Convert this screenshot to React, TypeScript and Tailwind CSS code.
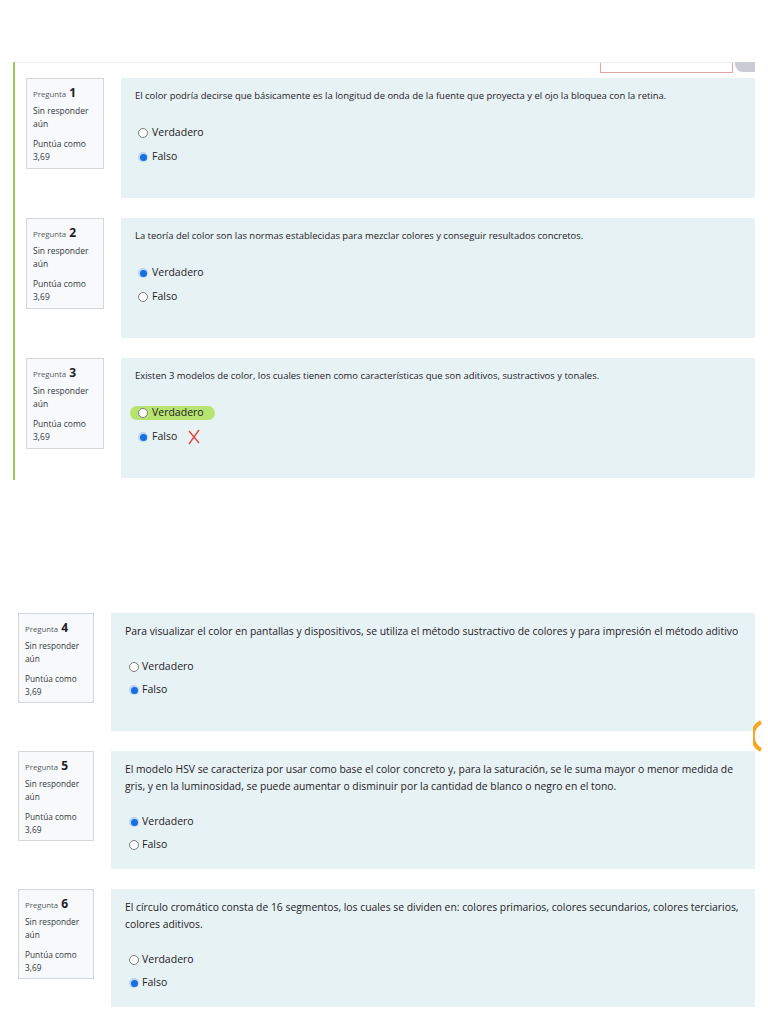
import React from "react";

type Q = {
  n: number;
  text: React.ReactNode;
  checked: "v" | "f";
  highlightV?: boolean;
  wrongF?: boolean;
};

const font = { fontFamily: '"Open Sans", "Noto Sans", sans-serif' };

function Radio({ on }: { on: boolean }) {
  return on ? (
    <span className="inline-flex items-center justify-center w-[10px] h-[10px] rounded-full bg-[#b9d4f5] shrink-0">
      <span className="w-[7px] h-[7px] rounded-full bg-[#1a6fe0]" />
    </span>
  ) : (
    <span className="inline-block w-[10px] h-[10px] rounded-full border border-[#7d7d7d] bg-white shrink-0" />
  );
}

function RedX() {
  return (
    <svg width="14" height="16" viewBox="0 0 14 16" className="ml-[6px]">
      <path d="M2 2 L12 14 M12 1 L2 15" stroke="#e8403a" strokeWidth="1.3" fill="none" />
    </svg>
  );
}

function InfoBox({ n, w, text }: { n: number; w: string; text: string }) {
  return (
    <div className={`${w} shrink-0 self-start border border-[#d3d6da] bg-[#f8f9fa] px-[6px] pt-[5px] pb-[9px] text-[#33383d] ${text}`}>
      <div className="flex items-baseline gap-[3px]">
        <span className="text-[7.8px] text-[#55595e]">Pregunta</span>
        <span className="text-[12px] font-bold text-[#1d2125]">{n}</span>
      </div>
      <div className="mt-[2px] leading-[13px]">Sin responder<br />aún</div>
      <div className="mt-[7px] leading-[13px]">Puntúa como<br />3,69</div>
    </div>
  );
}

function QuestionA({ q }: { q: Q }) {
  return (
    <div className="flex gap-[17px]">
      <InfoBox n={q.n} w="w-[78px] h-[91px]" text="text-[8.5px]" />
      <div className="flex-1 h-[120px] bg-[#e7f2f4] pl-[14px] pt-[11px] text-[#1d2125]">
        <div className="text-[9.45px] leading-[14px]">{q.text}</div>
        <div className="mt-[23px] ml-[3px] flex flex-col gap-[10px] text-[10.5px]">
          <div className="flex items-center">
            <span className={`flex items-center gap-[4px] h-[14px] ${q.highlightV ? "bg-[#b7e36f] rounded-full pl-[8px] pr-[11px] -ml-[8px]" : ""}`}>
              <Radio on={q.checked === "v"} />
              <span>Verdadero</span>
            </span>
          </div>
          <div className="flex items-center gap-[4px] h-[14px]">
            <Radio on={q.checked === "f"} />
            <span>Falso</span>
            {q.wrongF && <RedX />}
          </div>
        </div>
      </div>
    </div>
  );
}

function QuestionB({ q }: { q: Q }) {
  return (
    <div className="flex gap-[17px]">
      <InfoBox n={q.n} w="w-[76px] h-[90px]" text="text-[8.3px]" />
      <div className="flex-1 h-[118px] bg-[#e7f2f4] pl-[14px] pt-[10px] text-[#1d2125]">
        <div className="text-[10.35px] leading-[17px]">{q.text}</div>
        <div className="mt-[20px] ml-[4px] flex flex-col gap-[9px] text-[10.5px]">
          <div className="flex items-center gap-[3px] h-[14px]">
            <Radio on={q.checked === "v"} />
            <span>Verdadero</span>
          </div>
          <div className="flex items-center gap-[3px] h-[14px]">
            <Radio on={q.checked === "f"} />
            <span>Falso</span>
          </div>
        </div>
      </div>
    </div>
  );
}

export default function App() {
  const qa: Q[] = [
    {
      n: 1,
      text: "El color podría decirse que básicamente es la longitud de onda de la fuente que proyecta y el ojo la bloquea con la retina.",
      checked: "f",
    },
    {
      n: 2,
      text: "La teoría del color son las normas establecidas para mezclar colores y conseguir resultados concretos.",
      checked: "v",
    },
    {
      n: 3,
      text: "Existen 3 modelos de color, los cuales tienen como características que son aditivos, sustractivos y tonales.",
      checked: "f",
      highlightV: true,
      wrongF: true,
    },
  ];
  const qb: Q[] = [
    {
      n: 4,
      text: "Para visualizar el color en pantallas y dispositivos, se utiliza el método sustractivo de colores y para impresión el método aditivo",
      checked: "f",
    },
    {
      n: 5,
      text: (
        <>
          El modelo HSV se caracteriza por usar como base el color concreto y, para la saturación, se le suma mayor o menor medida de
          <br />
          gris, y en la luminosidad, se puede aumentar o disminuir por la cantidad de blanco o negro en el tono.
        </>
      ),
      checked: "v",
    },
    {
      n: 6,
      text: (
        <>
          El círculo cromático consta de 16 segmentos, los cuales se dividen en: colores primarios, colores secundarios, colores terciarios,
          <br />
          colores aditivos.
        </>
      ),
      checked: "f",
    },
  ];

  return (
    <div className="relative w-[768px] h-[1024px] bg-white overflow-hidden" style={font}>
      {/* Section A */}
      <div className="ml-[13px] mt-[62px] w-[742px] h-[418px] border-l-2 border-[#9bc85a] flex flex-col">
        <div className="flex h-[16px] items-start">
          <div className="flex-1 h-[10px] border-t border-[#ececec] flex justify-end">
            <div className="w-[133px] h-[10px] border-x border-b border-[#e0a4a4] mr-[2px]" />
          </div>
          <div className="w-[20px] h-[10px] bg-[#c9cdd3] rounded-bl-[8px]" />
        </div>
        <div className="pl-[11px] flex flex-col gap-[20px]">
          {qa.map((q) => (
            <QuestionA key={q.n} q={q} />
          ))}
        </div>
      </div>

      {/* Section B */}
      <div className="ml-[18px] mt-[133px] w-[737px] flex flex-col gap-[20px]">
        {qb.map((q) => (
          <QuestionB key={q.n} q={q} />
        ))}
      </div>

      {/* orange floating element edge */}
      <svg className="absolute left-[753px] top-[720px]" width="15" height="32" viewBox="0 0 15 32">
        <path d="M8 2 A 16 16 0 0 0 8 30" stroke="#f5a623" strokeWidth="4" fill="none" />
      </svg>
    </div>
  );
}
